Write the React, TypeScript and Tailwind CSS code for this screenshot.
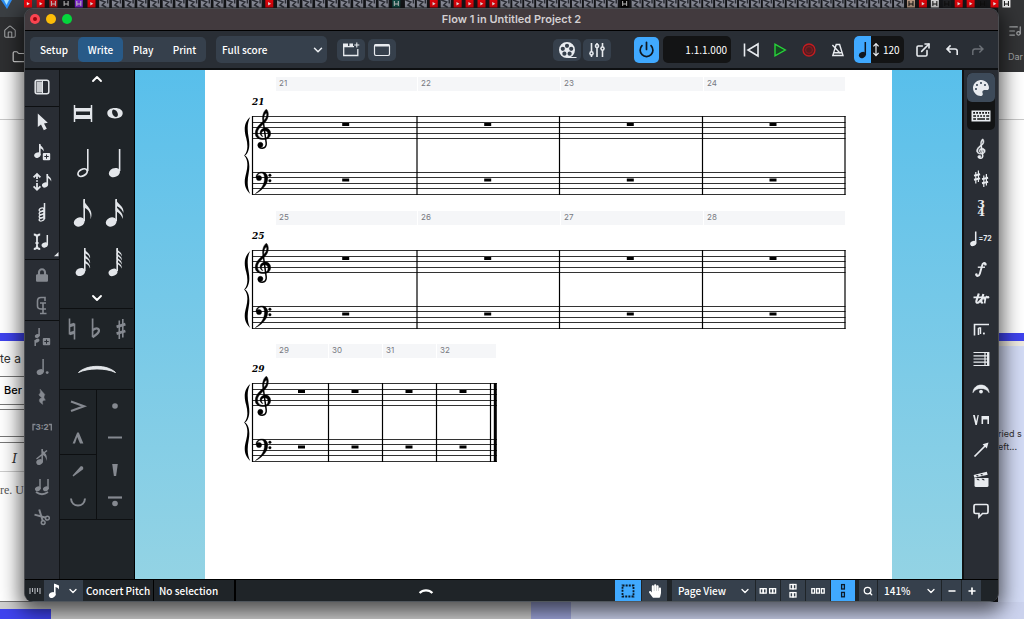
import React from 'react';
import type { ReactNode } from 'react';
import { ChevronDown, ChevronUp, ExternalLink, Home, Folder, Power, Scissors, Search, ListMusic, Minus, Plus } from 'lucide-react';
import { FaPalette, FaLock, FaHandPaper } from 'react-icons/fa';

/* ---------- shared drawing parts ---------- */

function Glyph({ box = '-18 -15 36 30', className = 'w-9 h-[30px] shrink-0', children }: { box?: string; className?: string; children: ReactNode }) {
  return (
    <svg viewBox={box} className={className} fill="currentColor" stroke="none" aria-hidden="true">
      {children}
    </svg>
  );
}

function Head({ x, y, rx = 3, ry = 2.2 }: { x: number; y: number; rx?: number; ry?: number }) {
  return <ellipse cx={x} cy={y} rx={rx} ry={ry} transform={`rotate(-25 ${x} ${y})`} />;
}

function Line({ d, w = 1.3 }: { d: string; w?: number }) {
  return <path d={d} fill="none" stroke="currentColor" strokeWidth={w} />;
}

const TREBLE =
  'M11 -24.3C8 -22 6.6 -17 7.6 -12C3.5 -8.5 0 -5 0 0C0 4 3.5 6 8 6C12.5 6 15.3 3.8 15.3 0C15.3 -3.5 13 -5.4 10 -5.4C6.8 -5.4 4.8 -3 4.8 -.6C4.8 1.5 6.2 2.8 7.6 3.1C6.6 2 6.2 1.2 6.2 .2C6.2 -1.6 7.6 -2.8 9.4 -2.8C11.6 -2.8 12.8 -1.3 12.8 1C12.8 3.6 11 5 8.2 5C4.8 5 2.2 3 2.2 -.6C2.2 -4.4 5.5 -7 8.6 -10C11.5 -12.8 13 -15.5 13 -19C13 -21.5 12 -23.6 11 -24.3ZM11.2 -20.5C12 -18 11 -15.5 8.6 -13C8.2 -16.5 9 -19.6 11.2 -20.5Z';

function TrebleClef({ weight = 1.3 }: { weight?: number }) {
  return (
    <>
      <path d={TREBLE} fillRule="evenodd" />
      <path d="M8 -12L10.9 9.4C11.3 12.6 9.6 14.7 7 14.7C4.6 14.7 3 13.2 3 11.2" fill="none" stroke="currentColor" strokeWidth={weight} />
      <circle cx="5.1" cy="11.3" r="2.5" />
    </>
  );
}

function BassClef() {
  return (
    <>
      <path d="M.7 0C.4 -3.5 3 -5.9 6.6 -5.9C10.4 -5.9 12.5 -3.2 12.5 .2C12.5 7 6.4 12.6 .1 15.6C5.5 11.5 9.2 7 9.2 .5C9.2 -3 8.3 -4.9 6 -4.9C3.8 -4.9 2.1 -3.5 2 -1.5Z" />
      <circle cx="3.7" cy="0" r="2.6" />
      <circle cx="14.6" cy="-2.7" r="1.3" />
      <circle cx="14.6" cy="2.7" r="1.3" />
    </>
  );
}

/* ---------- score ---------- */

type Measure = { number: number; cell: string };
type SystemData = { first: number; measures: Measure[]; bars: number[]; rests: number[]; end: number; final?: boolean };

const WIDE = ['w-[141px]', 'w-[142px]', 'w-[142px]', 'w-[141px]'];
const NARROW = ['w-[52px]', 'w-[53px]', 'w-[53px]', 'w-[59px]'];

function wide(first: number): SystemData {
  return {
    first,
    measures: WIDE.map((cell, i) => ({ number: first + i, cell })),
    bars: [173, 315.5, 458.5, 601],
    rests: [101.7, 243.7, 386.3, 529],
    end: 601.5,
  };
}

const SYSTEMS: SystemData[] = [
  wide(21),
  wide(25),
  {
    first: 29,
    measures: NARROW.map((cell, i) => ({ number: 29 + i, cell })),
    bars: [84.5, 138.5, 192.5, 246.5],
    rests: [57.5, 111, 165, 219],
    end: 253,
    final: true,
  },
];

const STAFF_LINES = [7.5, 13.5, 18.5, 24.5, 29.5, 63.5, 68.5, 74.5, 79.5, 85.5];

function System({ data }: { data: SystemData }) {
  return (
    <section>
      <div className="flex gap-px pl-8">
        {data.measures.map((m) => (
          <div key={m.number} className={`${m.cell} h-3.5 bg-[#f5f6f8] pl-[3px] font-[Inter,'Noto_Sans',sans-serif] text-[8px] leading-3 text-[#777981]`}>
            {m.number}
          </div>
        ))}
      </div>
      <p className="h-[18px] pl-2 pt-[5px] font-['DejaVu_Serif',serif] text-[9px] font-bold italic leading-3 text-black">{data.first}</p>
      <svg viewBox="0 0 604 90" className="h-[90px] w-[604px] text-black" fill="currentColor" aria-label={`System starting at bar ${data.first}`}>
        <path d="M6.3 8C-.8 14 .2 22 2.2 29C3.9 36 4.2 42 .2 46.5C4.2 51 3.9 57 2.2 64C.2 71 -.8 79 6.3 85C3.4 80 3 73 4.7 64C6.2 56 5 49 1 46.5C5 44 6.2 37 4.7 29C3 20 3.4 13 6.3 8Z" />
        {STAFF_LINES.map((y) => (
          <line key={y} x1="8" x2={data.end} y1={y} y2={y} stroke="#333" strokeWidth="1" />
        ))}
        <line x1="8.5" x2="8.5" y1="7" y2="86" stroke="#000" strokeWidth="1.2" />
        {data.bars.map((x) => (
          <line key={x} x1={x} x2={x} y1="7" y2="86" stroke="#000" strokeWidth="1.2" />
        ))}
        {data.final && <rect x="249.8" y="7" width="3" height="79" />}
        {data.rests.map((x) => (
          <g key={x}>
            <rect x={x - 3.5} y="14" width="7" height="3" />
            <rect x={x - 3.5} y="69.5" width="7" height="3" />
          </g>
        ))}
        <g transform="translate(11.3 24.5)" stroke="currentColor" strokeWidth=".5"><TrebleClef weight={1.5} /></g>
        <g transform="translate(11.3 69)" stroke="currentColor" strokeWidth=".4"><BassClef /></g>
      </svg>
    </section>
  );
}

/* ---------- side tool columns ---------- */

function Tool({ label, children }: { label: string; children: ReactNode }) {
  return (
    <button type="button" aria-label={label} className="flex h-[30px] w-full items-center justify-center">
      {children}
    </button>
  );
}

function LeftTools() {
  return (
    <nav aria-label="Toolbox" className="w-[35px] shrink-0 border-r border-[#121417] bg-[#292d34] text-[#e3e6ea]">
      <div className="border-b border-[#0d0f11] pb-1 pt-0.5">
        <Tool label="Show panel">
          <Glyph>
            <rect x="-6.8" y="-6.8" width="13.6" height="13.6" rx="2" fill="none" stroke="currentColor" strokeWidth="1.5" />
            <rect x="-5.5" y="-5.5" width="5.5" height="11" opacity=".85" />
            <rect x="0" y="-6" width="1" height="12" />
          </Glyph>
        </Tool>
      </div>
      <div className="border-b border-[#0d0f11] pb-0.5">
        <Tool label="Select">
          <Glyph><path d="M-4.2 -8.4L-4.2 5L-1 2.4L1.8 8.2L4.8 6.8L2 1.4L5.8 .8Z" /></Glyph>
        </Tool>
        <Tool label="Note input">
          <Glyph>
            <Head x={-4.6} y={3.2} rx={3.3} ry={2.6} />
            <Line d="M-2.2 3V-8" w={1.6} />
            <path d="M-2.8 -8.4C-2 -5.5 2.6 -5 1.6 -.4C.8 -3 -1.2 -3.4 -2.6 -4Z" />
            <path fillRule="evenodd" d="M1.8 1H7.2Q8.2 1 8.2 2V7.2Q8.2 8.2 7.2 8.2H1.8Q.8 8.2 .8 7.2V2Q.8 1 1.8 1ZM4 2.4V4.1H2.3V5.1H4V6.8H5V5.1H6.7V4.1H5V2.4Z" />
          </Glyph>
        </Tool>
        <Tool label="Pitch before duration">
          <Glyph>
            <Line d="M-5 -7.5V-3M-5 -1.8V-.3M-5 1V7M-8.4 -4.6L-5 -8L-1.6 -4.6M-8.4 4.4L-5 7.8L-1.6 4.4" w={1.8} />
            <Head x={3} y={3} rx={3.1} ry={2.4} />
            <Line d="M5.3 3V-8" w={1.6} />
            <path d="M4.8 -8.2C5.5 -5.5 10 -5 9.2 -.6C8 -3.4 6.4 -3.8 4.8 -4.2Z" />
          </Glyph>
        </Tool>
        <Tool label="Chords">
          <Glyph>
            {[-2.5, 0.8, 4, 7.2].map((y) => (
              <ellipse key={y} cx="-.4" cy={y} rx="2.6" ry="1.5" transform={`rotate(-20 0 ${y})`} fill="none" stroke="currentColor" strokeWidth="1.3" />
            ))}
            <Line d="M2.5 7V-9" w={1.5} />
          </Glyph>
        </Tool>
        <Tool label="Insert">
          <Glyph>
            <Line d="M-8.2 -7.5Q-5 -7.5 -5 -4.5V4Q-5 7 -8.2 7M-1.8 -7.5Q-5 -7.5 -5 -4.5M-5 4Q-5 7 -1.8 7M-6.5 1H-3.5" w={1.8} />
            <Head x={2.7} y={3} rx={3.2} ry={2.5} />
            <Line d="M5.3 3V-7" w={1.5} />
            <path d="M16.5 10V14.3H12Z" />
          </Glyph>
        </Tool>
      </div>
      <div className="border-b border-[#0d0f11] text-[#858990]">
        <Tool label="Lock duration"><FaLock className="h-3.5 w-3" /></Tool>
        <Tool label="Force duration">
          <Glyph><Line d="M3 -4V-7.5H-1Q-4.5 -7.5 -4.5 -4V1Q-4.5 4 -1 4H0M-2 -2H4M1 -2V8.5M-2 8.5H4.5M-1.5 4H4" w={1.6} /></Glyph>
        </Tool>
      </div>
      <div className="pt-px text-[#858990]">
        <Tool label="Grace notes">
          <Glyph>
            <Head x={-4.8} y={-1} rx={2.5} ry={1.9} />
            <Line d="M-2.9 -1V-9M-6.8 9V3" w={1.5} />
            <Head x={-4.9} y={3.6} rx={2.5} ry={1.9} />
            <path fillRule="evenodd" d="M1.8 1H7.2Q8.2 1 8.2 2V7.2Q8.2 8.2 7.2 8.2H1.8Q.8 8.2 .8 7.2V2Q.8 1 1.8 1ZM4 2.4V4.1H2.3V5.1H4V6.8H5V5.1H6.7V4.1H5V2.4Z" />
          </Glyph>
        </Tool>
        <Tool label="Dotted">
          <Glyph><Head x={-1.8} y={5} rx={3.6} ry={2.8} /><Line d="M1.1 5V-8" w={1.5} /><circle cx="5.2" cy="5.6" r="1.4" /></Glyph>
        </Tool>
        <Tool label="Rest">
          <Glyph><path d="M-2 -8L2.8 -2.6Q.8 .2 3.4 3.2Q-.6 2.8 .8 7.4Q-4 5 -2.2 1.8Q-1 .6 .2 1.2L-3.2 -2Q-.6 -4.4 -2 -8Z" stroke="currentColor" strokeWidth=".4" /></Glyph>
        </Tool>
        <Tool label="Tuplet">
          <Glyph>
            <Line d="M-9 3.5V-2.500H-6.500M9.300 3.500V-2.500H6.800" w={1.3} />
            <text x="0" y="3.200" textAnchor="middle" className="font-[Inter,sans-serif] text-[8px] font-extrabold">3:2</text>
          </Glyph>
        </Tool>
        <Tool label="Slashed grace note">
          <Glyph>
            <Head x={-2.4} y={5} rx={3.4} ry={2.7} />
            <Line d="M.2 5V-8M-5.500 2L5 -6.500" w={1.5} />
            <path d="M-.4 -8C.5 -5 6.600 -4 4.400 4C4 -1 1.6 -1.600 0 -2.2Z" />
          </Glyph>
        </Tool>
        <Tool label="Tie">
          <Glyph><Head x={-4.2} y={1.8} rx={2.9} ry={2.3} /><Head x={3.8} y={1.8} rx={2.9} ry={2.3} /><Line d="M-2 2V-8M6 2V-8" w={1.5} /><Line d="M-6 5Q0 9.5 6 5" w={1.8} /></Glyph>
        </Tool>
        <Tool label="Scissors">
          <Glyph>
            <Line d="M-7.500 -2.400L4 .8M-2.800 -7.500L.8 4" w={2} />
            <circle cx="5.400" cy="1.200" r="1.900" fill="none" stroke="currentColor" strokeWidth="1.500" />
            <circle cx="1.200" cy="5.600" r="1.900" fill="none" stroke="currentColor" strokeWidth="1.500" />
          </Glyph>
        </Tool>
      </div>
    </nav>
  );
}

function NoteButton({ label, children }: { label: string; children: ReactNode }) {
  return (
    <button type="button" aria-label={label} className="flex h-[50px] items-center justify-center">
      <Glyph box="-16 -25 32 50" className="h-[50px] w-8">{children}</Glyph>
    </button>
  );
}

function MarkButton({ label, children }: { label: string; children: ReactNode }) {
  return (
    <button type="button" aria-label={label} className="flex h-8 w-full items-center justify-center">
      <Glyph box="-16 -16 32 32" className="h-8 w-8">{children}</Glyph>
    </button>
  );
}

function NotesPanel() {
  return (
    <aside aria-label="Notes" className="flex w-[75px] shrink-0 flex-col border-r border-black bg-[#1f2428] pr-px text-[#e3e6ea]">
      <button type="button" aria-label="Fewer notes" className="flex h-[18px] items-center justify-center text-white"><ChevronUp className="h-4 w-4" strokeWidth={2.8} /></button>
      <div className="ml-[7px] grid w-16 grid-cols-2">
        <NoteButton label="Double whole note">
          <Line d="M-8.5 -8V9M8.5 -8V9" w={1.5} />
          <path fillRule="evenodd" d="M-9 -5H9V6H-9ZM-7 -1.5V2.100H7V-1.5Z" />
        </NoteButton>
        <NoteButton label="Whole note">
          <path fillRule="evenodd" d="M0 -5C4.8 -5 7.7 -2.8 7.7 .2S4.8 5.4 0 5.4S-7.7 3.2 -7.7 .2S-4.8 -5 0 -5ZM-1.6 -3.6C-4 -2.8 -3 2.8 .8 4C4.6 4 3 -3.4 -1.6 -3.6Z" />
        </NoteButton>
        <NoteButton label="Half note">
          <ellipse cx="-.4" cy="9.6" rx="5" ry="3.2" transform="rotate(-30 -.4 9.6)" fill="none" stroke="currentColor" strokeWidth="1.8" />
          <Line d="M4.8 8V-14" w={1.6} />
        </NoteButton>
        <NoteButton label="Quarter note"><Head x={-0.6} y={9.6} rx={5.8} ry={4.4} /><Line d="M4.600 8V-14" w={1.6} /></NoteButton>
        <NoteButton label="Eighth note">
          <Head x={-3.8} y={9} rx={5.6} ry={4.4} /><Line d="M1.2 8V-14" w={1.6} />
          <path d="M.5 -14C2 -7 11.5 -4 7.6 6.5C8.2 -1 4.4 -4.5 .5 -5.5Z" />
        </NoteButton>
        <NoteButton label="Sixteenth note">
          <Head x={-3.8} y={9} rx={5.6} ry={4.4} /><Line d="M1.2 8V-14" w={1.6} />
          <path d="M.5 -14C2 -9 9.5 -7 8.4 0C7 -4.5 3.6 -6 .5 -7.5ZM.5 -8C2 -3 9 -1 7.8 6C6.5 1.5 3.6 0 .5 -2.5Z" />
        </NoteButton>
        <NoteButton label="Thirty-second note">
          <Head x={-2.6} y={9} rx={5} ry={3.8} /><Line d="M1.8 8V-15" w={1.6} />
          <path d="M1 -15C2 -11 8 -10 7 -4.5C6 -8 4 -9 1 -10ZM1 -10C2 -6 8 -5 7 .5C6 -3 4 -4 1 -5ZM1 -5C2 -1 8 0 7 5.5C6 2 4 1 1 0Z" />
        </NoteButton>
        <NoteButton label="Sixty-fourth note">
          <Head x={-2} y={9.4} rx={4.6} ry={3.4} /><Line d="M2.2 8V-15" w={1.6} />
          <path d="M1.5 -15C2 -12 7.5 -11 6.8 -6.5C6 -9 4 -10 1.5 -11.5ZM1.5 -11C2 -8 7.5 -7 6.8 -2.5C6 -5 4 -6 1.5 -7.5ZM1.5 -7C2 -4 7.5 -3 6.8 1.5C6 -1 4 -2 1.5 -3.5ZM1.5 -3C2 0 7.5 1 6.8 5.5C6 3 4 2 1.5 .5Z" />
        </NoteButton>
      </div>
      <button type="button" aria-label="More notes" className="flex h-[21px] items-center justify-center border-b border-[#0d0f11] text-white"><ChevronDown className="h-4 w-4" strokeWidth={2.8} /></button>
      <div className="grid h-10 grid-cols-3 place-items-center border-b border-[#0d0f11] text-[#858990]">
        <button type="button" aria-label="Natural" className="h-6 w-6"><Glyph box="-12 -12 24 24" className="h-6 w-6"><Line d="M-2.5 -10.500V5.4M2.5 -5.4V10.500" w={1.6} /><Line d="M-2.5 -3.2L2.5 -4.8M-2.5 4.8L2.5 3.2" w={3} /></Glyph></button>
        <button type="button" aria-label="Flat" className="h-6 w-6"><Glyph box="-12 -12 24 24" className="h-6 w-6"><Line d="M-3.4 -10.5V8.2" w={1.7} /><Line d="M-3.4 1.2C.5 -1.8 3.6 -.6 2.8 2.4C2.2 4.8 -.6 6.4 -3.4 8.2" w={2.3} /></Glyph></button>
        <button type="button" aria-label="Sharp" className="h-6 w-6"><Glyph box="-12 -12 24 24" className="h-6 w-6"><Line d="M-1.7 -8.6V10M1.8 -10V8.6" w={1.6} /><Line d="M-4.4 -2.2L4.4 -4.8M-4.4 4.600L4.4 2" w={2.8} /></Glyph></button>
      </div>
      <button type="button" aria-label="Slur" className="flex h-[41px] items-center justify-center border-b border-[#0d0f11]">
        <Glyph box="-20 -10 40 20" className="h-5 w-10"><path d="M-18.5 3.500C-10 -4.700 10 -4.700 18.5 3.500C9 -1.2 -9 -1.2 -18.5 3.500Z" stroke="currentColor" strokeWidth=".9" /></Glyph>
      </button>
      <div className="grid grid-cols-2 border-b border-[#0d0f11] text-[#858990]">
        <div className="border-r border-[#0d0f11]">
          <div className="border-b border-[#0d0f11]">
            <MarkButton label="Accent"><Line d="M-7 -4.500L6 .3L-7 5" w={2.1} /></MarkButton>
            <MarkButton label="Marcato"><path d="M-5.400 5.5L-.8 -5.5H.8L5.400 5.5H2L-.8 -1L-3 5.5Z" /></MarkButton>
          </div>
          <MarkButton label="Staccatissimo stress"><path d="M-5 5L3 -4.2Q5 -4.6 4.6 -2.2Z" stroke="currentColor" strokeWidth="1.200" /></MarkButton>
          <MarkButton label="Unstress"><Line d="M-7 -4.500C-6.500 4.800 6.500 4.800 7 -4.500" w={2} /></MarkButton>
        </div>
        <div>
          <MarkButton label="Staccato"><circle cx="0" cy="0" r="2.8" /></MarkButton>
          <MarkButton label="Tenuto"><Line d="M-7 -.5H7" w={2} /></MarkButton>
          <MarkButton label="Staccatissimo"><path d="M-2.8 -6H2.8L1.100 6H-1.100Z" /></MarkButton>
          <MarkButton label="Tenuto staccato"><Line d="M-7 -4.5H7" w={2.2} /><circle cx="0" cy="1.5" r="2.8" /></MarkButton>
        </div>
      </div>
    </aside>
  );
}

function SmallSharp({ x, y }: { x: number; y: number }) {
  return <g transform={`translate(${x} ${y})`}><Line d="M-1.2 -5V6.500M1.4 -6.500V5" w={1.2} /><Line d="M-3 -1.4L3.100 -2.8M-3 2.8L3.100 1.4" w={1.9} /></g>;
}

function RightTools() {
  return (
    <nav aria-label="Notations" className="w-9 shrink-0 border-l-2 border-[#0f1113] bg-[#292d34] pt-[3px] text-[#e8ebef]">
      <div className="mx-auto mb-1 w-7 overflow-hidden rounded-[5px] bg-[#131415]">
        <button type="button" aria-label="Palette" className="flex h-[29px] w-full items-center justify-center rounded-[5px] bg-[#3d4a59]"><FaPalette className="h-4 w-[18px]" /></button>
        <button type="button" aria-label="Keyboard" className="flex h-7 w-full items-center justify-center">
          <Glyph box="-14 -14 28 28" className="h-7 w-7">
            <path fillRule="evenodd" d="M-9.5 -5.5H9.5V5.5H-9.5ZM-7.8 -4V-2.3H-6V-4ZM-4.8 -4V-2.3H-3V-4ZM-1.8 -4V-2.3H0V-4ZM1.2 -4V-2.3H3V-4ZM4.2 -4V-2.3H6V-4ZM7 -4V-2.3H8.2V-4ZM-7.8 -.8V.7H-5V-.8ZM-3.8 -.8V.7H-2V-.8ZM-.8 -.8V.7H1V-.8ZM2.2 -.8V.7H4V-.8ZM5.2 -.8V.7H8.2V-.8ZM-7.8 2.2V3.8H-5V2.2ZM-3.8 2.2V3.8H4V2.2ZM5.2 2.2V3.8H8.2V2.2Z" />
          </Glyph>
        </button>
      </div>
      <Tool label="Clefs"><Glyph><g transform="translate(-4.4 2) scale(.56 .5)" stroke="currentColor" strokeWidth="1.2"><TrebleClef weight={2.8} /></g></Glyph></Tool>
      <Tool label="Key signatures"><Glyph><SmallSharp x={-4} y={-2} /><SmallSharp x={4} y={1.5} /></Glyph></Tool>
      <Tool label="Time signatures"><span className="flex flex-col font-['DejaVu_Serif',serif] text-[11px] font-bold leading-[8px]"><span>3</span><span>4</span></span></Tool>
      <Tool label="Tempo">
        <span className="flex items-center">
          <Glyph box="-4 -8 8 16" className="h-4 w-2"><Head x={-0.8} y={4.6} rx={3.1} ry={2.5} /><Line d="M1.7 4.6V-7.500" w={1.5} /></Glyph>
          <span className="font-[Inter,sans-serif] text-[7px] font-bold leading-3">=72</span>
        </span>
      </Tool>
      <Tool label="Dynamics">
        <Glyph>
          <Line d="M4.600 -4.800C3.800 -7 1.600 -6 .9 -2.800L-1.100 4.500C-1.900 7.400 -4.200 7.600 -4.800 5.800" w={1.9} />
          <Line d="M-3.200 -1.800H4" w={1.4} />
          <circle cx="4.400" cy="-4.600" r="1.200" />
          <circle cx="-4.600" cy="5.400" r="1.200" />
        </Glyph>
      </Tool>
      <Tool label="Ornaments">
        <Glyph>
          <Line d="M-2.200 -5.500L-4.600 1.800Q-5.200 4.400 -2.600 3.600L1.500 -.8M2.400 -5L.2 2Q-.2 4.300 2 3.400" w={2.1} />
          <Line d="M-7.500 -1.600H3.400L2.800 .5M6.200 -2.800Q4.200 -2 3.600 4.400" w={1.7} />
          <circle cx="7" cy="-1.800" r="1.300" />
        </Glyph>
      </Tool>
      <Tool label="Repeats"><Glyph><Line d="M-6.5 6.500V-4.5H8M-2.500 6V-1" w={1.6} /><Line d="M-2.500 -1H-.5V5" w={1.4} /><rect x="2" y="3.6" width="1.8" height="1.8" /></Glyph></Tool>
      <Tool label="Bars"><Glyph><Line d="M-7.5 -6.5H8M-7.5 -3.2H8M-7.5 0H8M-7.5 3.2H8M-7.5 6.5H8M4 -7V7" w={1.2} /><rect x="6" y="-7" width="2.4" height="14" /></Glyph></Tool>
      <Tool label="Holds"><Glyph><path d="M-8 3.6C-7.5 -6.4 7.5 -6.4 8 3.6C5.6 -2 -5.6 -2 -8 3.6Z" stroke="currentColor" strokeWidth=".7" /><circle cx="0" cy="2.6" r="1.9" /></Glyph></Tool>
      <Tool label="Playing techniques"><Glyph><path d="M-8 -4H-6.200L-4.800 2L-3.4 -4H-2.2L-4.100 6H-5.600Z" /><path d="M.5 -3H8V5H6.4V.6H2.100V5H.5Z" /></Glyph></Tool>
      <Tool label="Lines"><Glyph><Line d="M-6.5 7.5L5 -4" w={1.7} /><path d="M7.5 -6.5L5.8 -.5L1.6 -4.700Z" /></Glyph></Tool>
      <Tool label="Video">
        <Glyph>
          <path d="M-6.5 -1.100H7.5V6.500Q7.5 8 6 8H-5Q-6.5 8 -6.5 6.500Z" />
          <path fillRule="evenodd" d="M-7.4 -4L5.8 -7.200L6.7 -4.2L-6.6 -1.2ZM-5.2 -3.6L-3.6 -2.5L-2 -2.9L-3.6 -4ZM-.8 -4.6L.8 -3.5L2.4 -3.9L.8 -5Z" />
          <path d="M-4.8 -.2L-3.2 1.300H-1.2L-2.8 -.2ZM.4 -.2L2 1.300H4L2.4 -.2Z" fill="#292d34" />
        </Glyph>
      </Tool>
      <Tool label="Comments"><Glyph><path d="M-5.5 -4.500H5.5Q7 -4.500 7 -3V3Q7 4.5 5.5 4.5H1.5L-2 8V4.5H-5.5Q-7 4.5 -7 3V-3Q-7 -4.500 -5.5 -4.500Z" fill="none" stroke="currentColor" strokeWidth="1.7" /></Glyph></Tool>
    </nav>
  );
}

/* ---------- top toolbar ---------- */

const MODES = [
  { name: 'Setup', width: 'w-12' },
  { name: 'Write', width: 'w-[45px]' },
  { name: 'Play', width: 'w-10' },
  { name: 'Print', width: 'w-[43px]' },
];

function SquareButton({ label, children }: { label: string; children: ReactNode }) {
  return <button type="button" aria-label={label} className="flex h-[22px] w-7 items-center justify-center rounded-[5px] bg-[#36404c]">{children}</button>;
}

function IconButton({ label, children }: { label: string; children: ReactNode }) {
  return <button type="button" aria-label={label} className="flex h-7 w-[29px] items-center justify-center">{children}</button>;
}

function Toolbar() {
  return (
    <div className="flex h-[39px] shrink-0 items-center border-b-2 border-[#0e1012] bg-[#292e35] pl-[5px] pr-2 text-[#e8ebef]">
      <div className="flex h-[25px] overflow-hidden rounded-[5px] bg-[#36404c]">
        {MODES.map((m) => (
          <button key={m.name} type="button" className={`${m.width} text-[10px] font-medium leading-4 text-white ${m.name === 'Write' ? 'rounded-[5px] bg-[#285a88]' : ''}`}>{m.name}</button>
        ))}
      </div>
      <div className="ml-2.5 grid h-[27px] w-[111px] items-center rounded-[5px] bg-[#36404c]">
        <select aria-label="Layout" className="col-start-1 row-start-1 h-full w-full appearance-none bg-transparent pl-1.5 text-[10px] font-medium leading-4 text-white"><option>Full score</option></select>
        <ChevronDown className="pointer-events-none col-start-1 row-start-1 mr-0.5 h-3.5 w-3.5 justify-self-end" strokeWidth={2.6} />
      </div>
      <div className="ml-2.5 flex gap-[3px]">
        <SquareButton label="New tab">
          <Glyph box="-10 -8 20 16" className="h-4 w-5"><path d="M-8 -6.5H-3V-4H-8ZM-1.6 -6.5H2V-4H-1.6Z" /><Line d="M-7.3 -4.5V5.5H6.8V-1M-8 -3.4H3" w={1.3} /><Line d="M5.8 -7.5V-2.5M3.3 -5H8.3" w={1.1} /></Glyph>
        </SquareButton>
        <SquareButton label="New window">
          <Glyph box="-10 -8 20 16" className="h-4 w-5"><rect x="-7.5" y="-5.5" width="15" height="11" rx="1.4" fill="none" stroke="currentColor" strokeWidth="1.2" /><rect x="-7.5" y="-5.8" width="15" height="2.4" rx="1" /></Glyph>
        </SquareButton>
      </div>
      <div className="ml-auto flex gap-0.5">
        <SquareButton label="Video">
          <Glyph box="-10 -9 20 18" className="h-[18px] w-5">
            <path fillRule="evenodd" d="M0 -8A8 8 0 1 1 0 8A8 8 0 1 1 0 -8ZM0 -6.3A2.1 2.1 0 1 0 0 -2.1A2.1 2.1 0 1 0 0 -6.3ZM-4.2 -3.3A2.1 2.1 0 1 0 -4.2 .9A2.1 2.1 0 1 0 -4.2 -3.3ZM4.2 -3.3A2.1 2.1 0 1 0 4.2 .9A2.1 2.1 0 1 0 4.2 -3.3ZM-2.6 1.6A2.1 2.1 0 1 0 -2.6 5.8A2.1 2.1 0 1 0 -2.6 1.6ZM2.6 1.6A2.1 2.1 0 1 0 2.6 5.8A2.1 2.1 0 1 0 2.6 1.6Z" />
            <Line d="M1 7.5H9.5" w={1.2} />
          </Glyph>
        </SquareButton>
        <SquareButton label="Mixer">
          <Glyph box="-10 -9 20 18" className="h-[18px] w-5"><Line d="M-5.5 -7V7M0 -7V7M5.5 -7V7" w={1.6} /><circle cx="-5.5" cy="3.4" r="2.3" /><circle cx="0" cy="-4" r="2.3" /><circle cx="5.5" cy="-1.4" r="2.3" /><circle cx="-5.5" cy="3.4" r=".8" fill="#36404c" /><circle cx="0" cy="-4" r=".8" fill="#36404c" /><circle cx="5.5" cy="-1.4" r=".8" fill="#36404c" /></Glyph>
        </SquareButton>
      </div>
      <button type="button" aria-label="Activate project" className="ml-[23px] flex h-[26px] w-[25px] items-center justify-center rounded-[5px] bg-[#40a9ff] text-[#101820]"><Power className="h-[17px] w-[17px]" strokeWidth={2.4} /></button>
      <output className="ml-1 flex h-[27px] w-[68px] items-center justify-end rounded-[5px] bg-[#131415] pr-1 text-[10px] leading-4 text-white">1.1.1.000</output>
      <div className="ml-[5px] flex">
        <IconButton label="Rewind"><Glyph box="-10 -9 20 18" className="h-[18px] w-5"><Line d="M-6.5 -6.5V6.5M7 -6V6L-3 0Z" w={1.6} /></Glyph></IconButton>
        <IconButton label="Play"><Glyph box="-10 -9 20 18" className="h-[18px] w-5 text-[#27d43a]"><path d="M-5 -5.8V5.8L5.3 0Z" fill="#174a22" stroke="currentColor" strokeWidth="1.4" /></Glyph></IconButton>
        <IconButton label="Record"><Glyph box="-10 -9 20 18" className="h-[18px] w-5 text-[#c41c20]"><circle cx="0" cy="0" r="6" fill="#551c20" stroke="currentColor" strokeWidth="1.3" /><circle cx="0" cy="0" r="3.4" fill="none" stroke="#8c1c20" strokeWidth="1" /></Glyph></IconButton>
        <IconButton label="Metronome"><Glyph box="-10 -9 20 18" className="h-[18px] w-5"><Line d="M-1.8 -5.5H1.6L5 5.5H-5.2ZM-5.6 -5L2.4 3.4M-4 2.8H4.4" w={1.4} /></Glyph></IconButton>
      </div>
      <div className="ml-0.5 flex h-[27px] w-[50px] items-center overflow-hidden rounded-[5px] bg-[#131415]">
        <button type="button" aria-label="Tempo mode" className="flex h-full w-[17px] items-center justify-center bg-[#40a9ff] text-[#101820]"><Glyph box="-7 -9 14 18" className="h-[18px] w-3.5"><Head x={-0.6} y={5} rx={3.6} ry={2.9} /><Line d="M2.3 5V-8" w={1.5} /></Glyph></button>
        <Glyph box="-5 -9 10 18" className="h-[18px] w-2.5"><Line d="M0 -6V5M-2.6 -3.6L0 -6.4L2.6 -3.6M-2.6 2.8L0 5.6L2.6 2.8" w={1.2} /></Glyph>
        <span className="pl-0.5 text-[10px] leading-4 text-white">120</span>
      </div>
      <div className="ml-1 flex">
        <IconButton label="Open in window"><ExternalLink className="h-4 w-4" strokeWidth={2.4} /></IconButton>
        <IconButton label="Undo"><Glyph box="-10 -9 20 18" className="h-[18px] w-5"><Line d="M-1.4 -4.6L-5 -1L-1.4 2.6M-5 -1H3Q5.2 -1 5.2 1.2V5" w={1.6} /></Glyph></IconButton>
        <button type="button" aria-label="Redo" className="flex h-7 w-6 items-center justify-center text-[#6d7278]"><Glyph box="-10 -9 20 18" className="h-[18px] w-5"><Line d="M1.4 -4.6L5 -1L1.4 2.6M5 -1H-3Q-5.2 -1 -5.2 1.2V5" w={1.4} /></Glyph></button>
      </div>
    </div>
  );
}

/* ---------- status bar ---------- */

function Page({ x, y, w = 4, h = 5 }: { x: number; y: number; w?: number; h?: number }) {
  return <rect x={x} y={y} width={w} height={h} fill="none" stroke="currentColor" strokeWidth="1.3" />;
}

function StatusButton({ label, width = 'w-6', active = false, children }: { label: string; width?: string; active?: boolean; children: ReactNode }) {
  return (
    <button type="button" aria-label={label} className={`${width} flex h-full shrink-0 items-center justify-center ${active ? 'bg-[#40a9ff] text-[#0b1a28]' : 'bg-[#36404c]'}`}>{children}</button>
  );
}

function StatusBar() {
  return (
    <footer className="flex h-[23px] shrink-0 items-stretch border-b border-t border-b-[#50565c] border-t-black bg-[#1f2428] text-[10px] font-medium leading-4 text-white">
      <button type="button" aria-label="Keyboard panel" className="flex w-[19px] items-center justify-center text-[#b4b8bd]"><Glyph box="-6 -5 12 10" className="h-2.5 w-3"><Line d="M-5 -3V3M-2.5 -3V1M0 -3V3M2.5 -3V1M5 -3V3" w={1.1} /></Glyph></button>
      <button type="button" aria-label="Note colours" className="flex w-[39px] items-center justify-between bg-[#36404c] pl-[3px] pr-1">
        <Glyph box="-7 -8 14 16" className="h-4 w-3.5"><Head x={-1.8} y={4} rx={3.4} ry={2.7} /><Line d="M.8 4V-7" w={1.6} /><path d="M.2 -7.6L5 -5.6V-1.4L3.8 -3L.2 -4.4Z" /></Glyph>
        <ChevronDown className="h-3 w-3" strokeWidth={2.6} />
      </button>
      <button type="button" className="w-[71px] whitespace-nowrap border-r border-black">Concert Pitch</button>
      <p className="flex w-[82px] items-center whitespace-nowrap border-r-2 border-black pl-[5px]">No selection</p>
      <button type="button" aria-label="Show lower panel" className="flex flex-1 items-center justify-center"><Glyph box="-8 -5 16 10" className="h-2.5 w-4"><Line d="M-6.4 2C-3 -1.6 3 -1.6 6.4 2" w={2.2} /></Glyph></button>
      <div className="flex gap-px">
        <StatusButton label="Marquee tool" width="w-[26px]" active><Glyph box="-8 -8 16 16" className="h-4 w-4"><rect x="-5.5" y="-5.5" width="11" height="11" fill="none" stroke="currentColor" strokeWidth="1.8" strokeDasharray="2 1.14" /></Glyph></StatusButton>
        <StatusButton label="Hand tool" width="w-[25px]"><FaHandPaper className="h-3.5 w-3" /></StatusButton>
      </div>
      <div className="ml-[5px] flex gap-px">
        <div className="grid w-[83px] items-center bg-[#36404c]">
          <select aria-label="View type" className="col-start-1 row-start-1 h-full w-full appearance-none bg-transparent pl-1.5 text-[10px] font-medium leading-4"><option>Page View</option></select>
          <ChevronDown className="pointer-events-none col-start-1 row-start-1 mr-1 h-3 w-3 justify-self-end" strokeWidth={2.6} />
        </div>
        <StatusButton label="Spreads horizontally"><Glyph box="-10 -8 20 16" className="h-4 w-5"><Page x={-7.8} y={-2.3} w={3} h={4.4} /><Page x={-4.8} y={-2.3} w={3} h={4.4} /><Page x={1.6} y={-2.3} w={3} h={4.4} /><Page x={4.6} y={-2.3} w={3} h={4.4} /></Glyph></StatusButton>
        <StatusButton label="Spreads vertically"><Glyph box="-10 -8 20 16" className="h-4 w-5"><Page x={-3} y={-6.5} w={3} h={4.4} /><Page x={0} y={-6.5} w={3} h={4.4} /><Page x={-3} y={1.6} w={3} h={4.4} /><Page x={0} y={1.6} w={3} h={4.4} /></Glyph></StatusButton>
        <StatusButton label="Pages horizontally"><Glyph box="-10 -8 20 16" className="h-4 w-5"><Page x={-6.2} y={-2.3} w={2.8} h={4.4} /><Page x={-1.4} y={-2.3} w={2.8} h={4.4} /><Page x={3.4} y={-2.3} w={2.8} h={4.4} /></Glyph></StatusButton>
        <StatusButton label="Pages vertically" active><Glyph box="-10 -8 20 16" className="h-4 w-5"><Page x={-1.4} y={-6.4} w={2.8} h={4.4} /><Page x={-1.4} y={1.4} w={2.8} h={4.4} /></Glyph></StatusButton>
      </div>
      <div className="ml-1 mr-[17px] flex gap-px">
        <StatusButton label="Zoom" width="w-[18px]"><Search className="h-2.5 w-2.5" strokeWidth={3} /></StatusButton>
        <div className="grid w-[63px] items-center bg-[#36404c]">
          <select aria-label="Zoom level" className="col-start-1 row-start-1 h-full w-full appearance-none bg-transparent pl-1.5 text-[10px] font-medium leading-4"><option>141%</option></select>
          <ChevronDown className="pointer-events-none col-start-1 row-start-1 mr-1 h-3 w-3 justify-self-end" strokeWidth={2.6} />
        </div>
        <StatusButton label="Zoom out" width="w-[19px]"><Minus className="h-2.5 w-2.5" strokeWidth={4} /></StatusButton>
        <StatusButton label="Zoom in" width="w-[19px]"><Plus className="h-2.5 w-2.5" strokeWidth={4} /></StatusButton>
      </div>
    </footer>
  );
}

/* ---------- browser behind the window ---------- */

const FAVICON_COUNT = 81;
const RED = [0, 1, 5, 19, 32, 34, 35, 36, 37, 73, 76, 77, 79];
const ODD: Record<number, string> = { 2: '#d4141c', 3: '#16161a', 4: '#8a2be2', 29: '#14524a', 48: '#050505', 72: '#c9a890', 74: '#e8e8e8', 75: '#222326', 78: '#18181a', 80: '#f0f0f0' };

function Favicons() {
  return (
    <svg viewBox="0 0 1024 8" className="absolute left-0 top-0 h-2 w-[1024px]" aria-hidden="true">
      {Array.from({ length: FAVICON_COUNT }, (_, i) => {
        const x = i < 30 ? 28 + 12.7 * i : 398 + 11.93 * (i - 29);
        if (RED.includes(i)) {
          return <g key={i}><rect x={x - 4} y="0" width="8" height="7.5" fill="#f5050d" /><path d={`M${x - 1.2} 2L${x + 1.8} 3.8L${x - 1.2} 5.6Z`} fill="#fff" /></g>;
        }
        if (ODD[i]) {
          return <g key={i}><rect x={x - 4} y="0" width="8" height="7.5" fill={ODD[i]} /><path d={`M${x - 2} 1V6M${x + 2} 1V6M${x - 2} 4H${x + 2}`} stroke={i > 70 ? '#111' : '#ddd'} strokeWidth="1" /></g>;
        }
        return <g key={i}><rect x={x - 5} y="0" width="10" height="7.5" fill="#9a9dab" /><path d={`M${x - 4.500} 0L${x + 1} 2L${x - 2} 5L${x + 2} 7.500M${x + 3.500} 0V3.500`} fill="none" stroke="#30323a" strokeWidth="1.5" /></g>;
      })}
    </svg>
  );
}

function Backdrop() {
  return (
    <div className="absolute inset-0 flex flex-col overflow-hidden bg-[#17181b] text-[#333]">
      <div className="flex min-h-0 flex-1 justify-between">
        <div className="w-10 overflow-hidden whitespace-nowrap bg-white font-[Inter,sans-serif] text-[12px]">
          <div className="h-[17px] bg-[#3b3f43]"><svg viewBox="0 0 24 17" className="h-[17px] w-6" aria-hidden="true"><path d="M1 0H12L7 9Z" fill="#2c8df4" /><path d="M4 0H9L6.500 5Z" fill="#a8e4ff" /></svg></div>
          <div className="h-[55px] bg-[#2e2f31] text-[#a6a8aa]">
            <Home className="ml-[3px] h-[30px] w-3.5" strokeWidth={1.8} />
            <Folder className="ml-3 h-5 w-3.5 text-[#dfe0e0]" strokeWidth={2} />
          </div>
          <div className="h-12 border-b border-[#c9c9c9]" />
          <div className="h-[213px]" />
          <div className="h-2 bg-[#3f43ee]" />
          <p className="h-9 border-b border-[#777] pt-2.5 leading-4">te a</p>
          <p className="h-7 border-b border-[#777] pl-1 pt-[5px] text-[11px] font-medium leading-4 text-black">Ber</p>
          <div className="h-[5px] border-b border-[#777]" />
          <div className="h-[27px] border-b border-[#777]" />
          <div className="h-[6px] border-b border-[#777]" />
          <p className="h-[29px] border-b border-[#ccc] pl-3 pt-2 font-['DejaVu_Serif',serif] text-[13px] italic leading-4">I</p>
          <p className="h-[130px] border-b border-[#777] pt-2.5 font-['Liberation_Serif',serif] text-[12px] leading-4 text-[#555]">re. Us</p>
        </div>
        <div className="w-[26px] overflow-hidden whitespace-nowrap bg-white font-[Inter,sans-serif]">
          <div className="h-[72px] bg-[#333436] pl-2.5 pt-6 text-[#a2a4a6]">
            <ListMusic className="h-3.5 w-3.5" strokeWidth={2} />
            <p className="pt-[11px] text-[9px] leading-4">Dar</p>
          </div>
          <div className="h-12 border-b border-[#c9c9c9]" />
          <div className="h-[213px]" />
          <div className="h-2 bg-[#3f43ee]" />
          <div className="h-[5px] bg-[#eeeae0]" />
          <div className="h-[260px] bg-[#d3dbf5] pt-[81px] text-[9px] leading-[13px] text-[#333]">
            <p>ried s</p>
            <p>eft...</p>
          </div>
        </div>
      </div>
      <div className="flex h-[17px]">
        <div className="flex w-[531px] items-end bg-[#d0d0d0]"><div className="h-[10px] w-[51px] bg-[#3f43ee]" /></div>
        <div className="w-10 bg-[#a0a8de]" />
        <div className="flex-1 bg-[#ccd3ee]" />
      </div>
    </div>
  );
}

export default function App() {
  return (
    <div className="relative h-screen overflow-hidden pb-[17px] pl-6 pr-[25px] pt-2 font-['Noto_Sans_CJK_SC','Noto_Sans',sans-serif]">
      <Backdrop />
      <Favicons />
      <main className="relative flex h-full flex-col overflow-hidden rounded-[9px] border border-b-0 border-[#4a4c50] bg-[#292e35] shadow-[0_6px_20px_4px_rgba(0,0,0,0.62)]">
        <header className="flex h-[22px] shrink-0 items-center border-b border-black bg-[#423a3e] pb-px pl-[5px] pr-[5px]">
          <div className="flex w-[60px] gap-1.5">
            <button type="button" aria-label="Close" className="flex h-2.5 w-2.5 items-center justify-center rounded-full bg-[#fc4450]"><span className="h-1 w-1 rounded-full bg-[#98060e]" /></button>
            <button type="button" aria-label="Minimise" className="h-2.5 w-2.5 rounded-full bg-[#fdbc08]" />
            <button type="button" aria-label="Zoom window" className="h-2.5 w-2.5 rounded-full bg-[#05d53c]" />
          </div>
          <h1 className="flex-1 pr-[60px] text-center font-[Inter,sans-serif] text-[11px] font-semibold leading-4 text-[#d3cfd1]">Flow 1 in Untitled Project 2</h1>
        </header>
        <Toolbar />
        <div className="flex min-h-0 flex-1">
          <LeftTools />
          <NotesPanel />
          <div className="flex min-w-0 flex-1 bg-linear-to-b from-[#58bfeb] to-[#93d3e4] px-[70px]">
            <div className="min-w-0 flex-1 overflow-hidden bg-white pl-[39px] pt-[7px]">
              <div className="grid grid-rows-[134px_133px_134px]">
                {SYSTEMS.map((s) => <System key={s.first} data={s} />)}
              </div>
            </div>
          </div>
          <RightTools />
        </div>
        <StatusBar />
      </main>
    </div>
  );
}
